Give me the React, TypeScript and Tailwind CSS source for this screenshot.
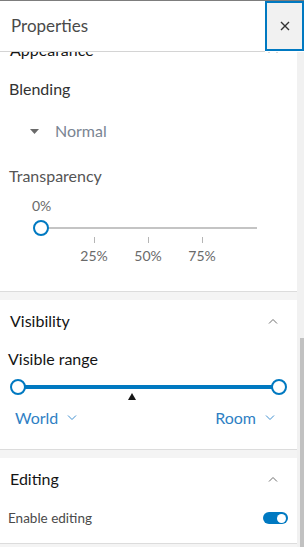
function ChevronUp() {
  return (
    <svg width="10" height="6" viewBox="0 0 10 6">
      <path d="M1 5.5 L5 1.5 L9 5.5" fill="none" stroke="#6e6e6e" strokeWidth="1" />
    </svg>
  );
}

function ChevronDown() {
  return (
    <svg width="10" height="6" viewBox="0 0 10 6">
      <path d="M1 0.5 L5 4.5 L9 0.5" fill="none" stroke="#3f8fd0" strokeWidth="1" />
    </svg>
  );
}

function SectionHeader({ title }: { title: string }) {
  return (
    <div className="h-[42px] flex items-center justify-between pl-[10px] pr-[19px]">
      <span className="text-[16px] text-[#151515]">{title}</span>
      <ChevronUp />
    </div>
  );
}

export default function App() {
  return (
    <div className="w-[304px] h-[547px] overflow-hidden bg-white border-t border-[#7d7d7d] flex flex-col font-['Lato',sans-serif]">
      <div className="h-[51px] flex shrink-0">
        <div className="flex-1 flex items-center pl-[11px] border-b border-[#d4d4d4]">
          <span className="text-[17px] text-[#4a4a4a]">Properties</span>
        </div>
        <button className="w-[39px] h-[50px] border-2 border-[#0079c1] bg-[#f1f1f1] flex items-center justify-center">
          <svg width="10" height="10" viewBox="0 0 10 10">
            <path d="M1 1 L9 9 M9 1 L1 9" stroke="#323232" strokeWidth="1.4" />
          </svg>
        </button>
      </div>

      <div className="flex-1 flex min-h-0">
        <div className="flex-1 overflow-hidden bg-[#f4f4f4]">
          <div className="-mt-[23px]">
            <section className="bg-white border-b border-[#dcdcdc] mb-[8px]">
              <SectionHeader title="Appearance" />
              <div className="mt-[8px] h-[20px] flex items-center pl-[9px] text-[16px] text-[#323232]">Blending</div>
              <div className="h-[30px] mt-[17px] flex items-center pl-[30px] gap-[16px]">
                <svg width="9" height="5" viewBox="0 0 9 5">
                  <path d="M0 0 L9 0 L4.5 5 Z" fill="#6a6a6a" />
                </svg>
                <span className="text-[16px] text-[#7a8593]">Normal</span>
              </div>
              <div className="mt-[20px] h-[20px] flex items-center pl-[9px] text-[16px] text-[#555]">Transparency</div>
              <div className="mt-[10px] h-[18px] flex items-center pl-[32px] text-[14px] text-[#6a6a6a]">0%</div>
              <div className="relative h-[16px] mt-[6px] ml-[33px] w-[224px]">
                <div className="absolute left-[8px] right-0 top-[7px] h-[2px] bg-[#c4c4c4]" />
                <div className="absolute left-0 top-0 w-[16px] h-[16px] rounded-full border-2 border-[#0079c1] bg-white" />
              </div>
              <div className="relative h-[55px] ml-[41px] w-[214px]">
                <div className="absolute left-[53px] top-[1px] w-px h-[6px] bg-[#b5b5b5]" />
                <div className="absolute left-[107px] top-[1px] w-px h-[6px] bg-[#b5b5b5]" />
                <div className="absolute left-[161px] top-[1px] w-px h-[6px] bg-[#b5b5b5]" />
                <span className="absolute left-[53px] top-[11px] -translate-x-1/2 text-[14px] leading-[18px] text-[#6a6a6a]">25%</span>
                <span className="absolute left-[107px] top-[11px] -translate-x-1/2 text-[14px] leading-[18px] text-[#6a6a6a]">50%</span>
                <span className="absolute left-[161px] top-[11px] -translate-x-1/2 text-[14px] leading-[18px] text-[#6a6a6a]">75%</span>
              </div>
            </section>

            <section className="bg-white border-b border-[#dcdcdc] mb-[8px]">
              <SectionHeader title="Visibility" />
              <div className="mt-[7px] h-[20px] flex items-center pl-[8px] text-[16px] text-[#151515]">Visible range</div>
              <div className="relative h-[16px] mt-[10px] mx-[10px]">
                <div className="absolute left-[8px] right-[8px] top-[6px] h-[4px] bg-[#0079c1]" />
                <div className="absolute left-0 top-0 w-[16px] h-[16px] rounded-full border-2 border-[#0079c1] bg-white" />
                <div className="absolute right-0 top-0 w-[16px] h-[16px] rounded-full border-2 border-[#0079c1] bg-white" />
                <svg className="absolute left-[118px] top-[14px]" width="8" height="7" viewBox="0 0 8 7">
                  <path d="M4 0 L8 7 L0 7 Z" fill="#151515" />
                </svg>
              </div>
              <div className="mt-[12px] h-[22px] flex items-center justify-between pl-[15px] pr-[22px] text-[16px] text-[#2f7fc4]">
                <div className="flex items-center gap-[9px]">
                  <span>World</span>
                  <ChevronDown />
                </div>
                <div className="flex items-center gap-[9px]">
                  <span>Room</span>
                  <ChevronDown />
                </div>
              </div>
              <div className="h-[20px]" />
            </section>

            <section className="bg-white border-b border-[#dcdcdc]">
              <SectionHeader title="Editing" />
              <div className="mt-[8px] h-[20px] flex items-center justify-between pl-[8px] pr-[9px]">
                <span className="text-[13.5px] text-[#4a4a4a]">Enable editing</span>
                <div className="w-[25px] h-[12px] rounded-full bg-[#0079c1] flex items-center justify-end pr-[2px]">
                  <div className="w-[9px] h-[9px] rounded-full bg-white" />
                </div>
              </div>
              <div className="h-[15px]" />
            </section>
          </div>
        </div>
        <div className="w-[7px] bg-[#f1f1f1] flex flex-col pl-[3px]">
          <div className="h-[286px]" />
          <div className="flex-1 bg-[#c1c1c1]" />
        </div>
      </div>
    </div>
  );
}
